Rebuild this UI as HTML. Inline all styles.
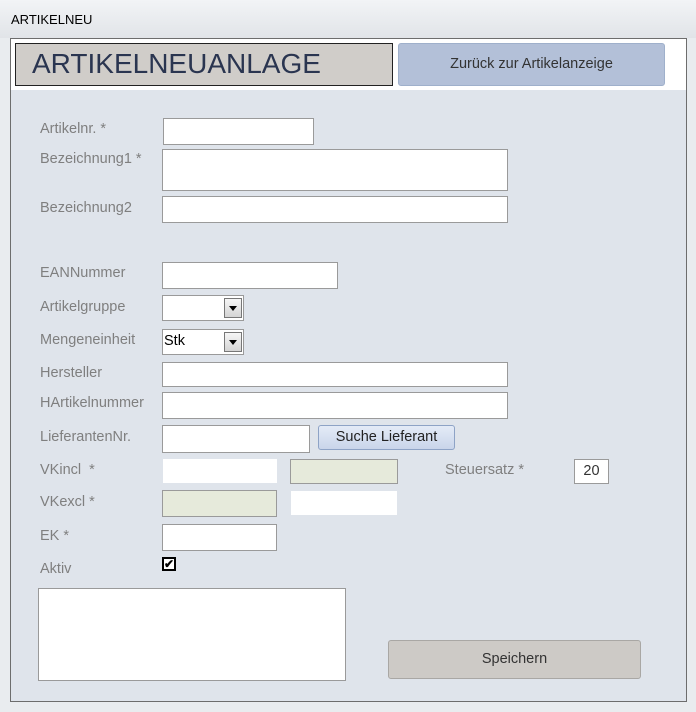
<!DOCTYPE html>
<html><head><style>
body{margin:0;width:696px;height:712px;background:#e9ecef;position:relative;overflow:hidden;font-family:"Liberation Sans",sans-serif;}
.a{position:absolute;box-sizing:border-box;}
.lbl{position:absolute;color:#7f7f7f;font-size:14.5px;}
.in{position:absolute;box-sizing:border-box;background:#fff;border:1px solid #9a9a9a;}
.g{background:#e6eadb;}
.dd{position:absolute;width:18px;height:20px;right:1px;top:1px;background:linear-gradient(#f6f6f6,#d4d4d4);border:1px solid #777;box-sizing:border-box;}
.dd:after{content:"";position:absolute;left:4px;top:7px;border-left:4px solid transparent;border-right:4px solid transparent;border-top:5px solid #000;}
</style></head><body>
<div class="a" style="left:0;top:0;width:696px;height:38px;background:linear-gradient(#f2f4f6,#e1e4e8);"></div>
<div class="a" style="left:11px;top:12px;font-size:13px;color:#000;">ARTIKELNEU</div>
<div class="a" style="left:10px;top:38px;width:677px;height:664px;border:1px solid #6d6d6d;background:#dfe4eb;"></div>
<div class="a" style="left:11px;top:39px;width:675px;height:51px;background:#fff;"></div>
<div class="a" style="left:15px;top:43px;width:378px;height:43px;background:#d0cdc9;border:1px solid #222;color:#2a3550;font-size:28px;padding:4px 0 0 16px;">ARTIKELNEUANLAGE</div>
<div class="a" style="left:398px;top:43px;width:267px;height:43px;background:#b3c0d8;border:1px solid #9fb0cb;border-radius:3px;color:#333;font-size:14.5px;text-align:center;line-height:41px;">Zurück zur Artikelanzeige</div>

<div class="lbl" style="left:40px;top:121px">Artikelnr. *</div>
<div class="in" style="left:163px;top:118px;width:151px;height:27px"></div>
<div class="lbl" style="left:40px;top:151px">Bezeichnung1 *</div>
<div class="in" style="left:162px;top:149px;width:346px;height:42px"></div>
<div class="lbl" style="left:40px;top:200px">Bezeichnung2</div>
<div class="in" style="left:162px;top:196px;width:346px;height:27px"></div>

<div class="lbl" style="left:40px;top:265px">EANNummer</div>
<div class="in" style="left:162px;top:262px;width:176px;height:27px"></div>
<div class="lbl" style="left:40px;top:299px">Artikelgruppe</div>
<div class="in" style="left:162px;top:295px;width:82px;height:26px"><div class="dd" style="top:2px"></div></div>
<div class="lbl" style="left:40px;top:332px">Mengeneinheit</div>
<div class="in" style="left:162px;top:329px;width:82px;height:26px;color:#000;font-size:14.5px;padding:3px 0 0 1px;">Stk<div class="dd" style="top:2px"></div></div>
<div class="lbl" style="left:40px;top:365px">Hersteller</div>
<div class="in" style="left:162px;top:362px;width:346px;height:25px"></div>
<div class="lbl" style="left:40px;top:395px">HArtikelnummer</div>
<div class="in" style="left:162px;top:392px;width:346px;height:27px"></div>
<div class="lbl" style="left:40px;top:429px">LieferantenNr.</div>
<div class="in" style="left:162px;top:425px;width:148px;height:28px"></div>
<div class="a" style="left:318px;top:425px;width:137px;height:25px;background:linear-gradient(#e4ebf7,#c9d5ea);border:1px solid #8ea3c6;border-radius:3px;font-size:14.5px;color:#222;text-align:center;line-height:23px;">Suche Lieferant</div>
<div class="lbl" style="left:40px;top:462px">VKincl &nbsp;*</div>
<div class="in" style="left:163px;top:459px;width:114px;height:24px;border-color:#fff"></div>
<div class="in g" style="left:290px;top:459px;width:108px;height:25px"></div>
<div class="lbl" style="left:445px;top:462px">Steuersatz *</div>
<div class="in" style="left:574px;top:459px;width:35px;height:25px;font-size:14.5px;color:#333;text-align:center;line-height:23px;">20</div>
<div class="lbl" style="left:40px;top:494px">VKexcl *</div>
<div class="in g" style="left:162px;top:490px;width:115px;height:27px"></div>
<div class="in" style="left:291px;top:491px;width:106px;height:24px;border-color:#fff"></div>
<div class="lbl" style="left:40px;top:528px">EK *</div>
<div class="in" style="left:162px;top:524px;width:115px;height:27px"></div>
<div class="lbl" style="left:40px;top:561px">Aktiv</div>
<div class="a" style="left:162px;top:557px;width:14px;height:14px;background:#fff;border:2px solid #000;font-size:12px;line-height:10px;font-weight:bold;text-align:center;">✔</div>
<div class="in" style="left:38px;top:588px;width:308px;height:93px"></div>
<div class="a" style="left:388px;top:640px;width:253px;height:39px;background:#cdcac6;border:1px solid #a9a7a4;border-radius:3px;color:#333;font-size:14.5px;text-align:center;line-height:37px;">Speichern</div>
</body></html>
